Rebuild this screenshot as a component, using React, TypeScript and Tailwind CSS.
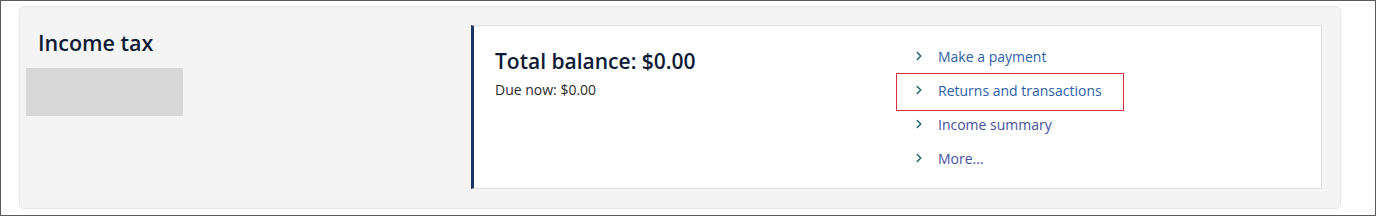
import { ChevronRight } from "lucide-react";

const links = [
  { label: "Make a payment", visited: false },
  { label: "Returns and transactions", visited: false },
  { label: "Income summary", visited: true },
  { label: "More...", visited: true },
];

export default function App() {
  return (
    <div
      className="h-[216px] w-[1376px] border border-[#5a5a5a] bg-white pb-[6px] pl-[18px] pr-[34px] pt-[5px]"
      style={{ fontFamily: '"Open Sans", "Noto Sans", sans-serif' }}
    >
      <div className="flex h-full rounded-[5px] border border-[#e6e6e6] bg-[#f4f4f4]">
        <div className="w-[451px] shrink-0 pl-[6px]">
          <h2 className="pl-[12px] pt-[21px] text-[21.5px] font-semibold leading-[30px] text-[#0e1b36]">
            Income tax
          </h2>
          <div className="mt-[10px] h-[48px] w-[157px] bg-[#d7d7d7]" />
        </div>

        <div className="mb-[19px] mr-[18px] mt-[18px] flex flex-1 border border-l-[3px] border-[#dedede] border-l-[#1d3563] bg-white">
          <div className="w-[423px] shrink-0 pl-[21px] pt-[20px]">
            <p className="text-[21px] font-semibold leading-[30px] text-[#0e1b36]">
              Total balance: $0.00
            </p>
            <p className="mt-[4px] text-[14px] leading-[20px] text-[#2b2b2b]">
              Due now: $0.00
            </p>
          </div>

          <div className="relative flex flex-col pt-[13px]">
            {links.map((l) => (
              <a
                key={l.label}
                href="#"
                className={`flex h-[34px] items-center pl-[15px] text-[14px] ${
                  l.visited ? "text-[#45509e]" : "text-[#2d5fa6]"
                }`}
              >
                <ChevronRight
                  className="mr-[12px] h-[14px] w-[14px] text-[#1d6474]"
                  strokeWidth={2.5}
                />
                {l.label}
              </a>
            ))}
            <div className="absolute left-[-1px] top-[47px] h-[38px] w-[228px] border-[1.5px] border-[#d8323a]" />
          </div>
        </div>
      </div>
    </div>
  );
}
